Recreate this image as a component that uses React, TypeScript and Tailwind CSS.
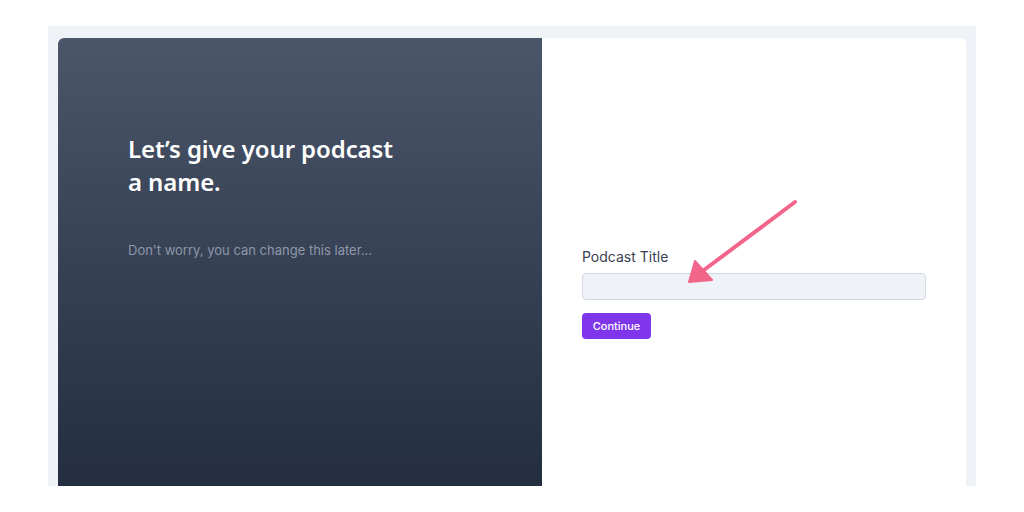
import React from "react";

const PointerArrow = () => (
  <svg
    className="pointer-events-none absolute left-0 top-0"
    width="1024"
    height="512"
    viewBox="0 0 1024 512"
  >
    <line x1="795" y1="202" x2="700" y2="273" stroke="#f2668b" strokeWidth="4" strokeLinecap="round" />
    <polygon points="689,282 695,261 712,280" fill="#f2668b" stroke="#f2668b" strokeWidth="2" strokeLinejoin="round" />
  </svg>
);

export default function App() {
  return (
    <div className="relative h-[512px] w-[1024px] overflow-hidden bg-white font-['Inter',sans-serif]">
      <div className="ml-[48px] mt-[26px] h-[460px] w-[928px] overflow-hidden bg-[#eff2f7] px-[10px] pt-[12px]">
        <div className="flex h-[480px] overflow-hidden rounded-md bg-white">
          <section className="w-[484px] shrink-0 bg-gradient-to-b from-[#4b566b] to-[#212b3d] pl-[70px] pt-[94px]">
            <h1 className="w-[272px] font-['Noto_Sans',sans-serif] text-[24px] font-semibold leading-[33px] tracking-[-0.1px] text-white">
              Let’s give your podcast a name.
            </h1>
            <p className="mt-[42px] text-[13px] leading-[20px] text-[#8d97a8]">
              Don't worry, you can change this later...
            </p>
          </section>
          <section className="flex-1 px-[40px] pt-[209px]">
            <label className="block text-[14px] leading-[20px] text-[#374151]">Podcast Title</label>
            <input
              type="text"
              className="mt-[6px] block h-[27px] w-full rounded-[4px] border border-[#d3d9e2] bg-[#eff2f7] px-2 text-sm outline-none"
            />
            <button className="mt-[13px] flex h-[26px] w-[69px] items-center justify-center rounded-[4px] bg-[#7f35ea] text-[11px] font-medium text-white">
              Continue
            </button>
          </section>
        </div>
      </div>
      <PointerArrow />
    </div>
  );
}
